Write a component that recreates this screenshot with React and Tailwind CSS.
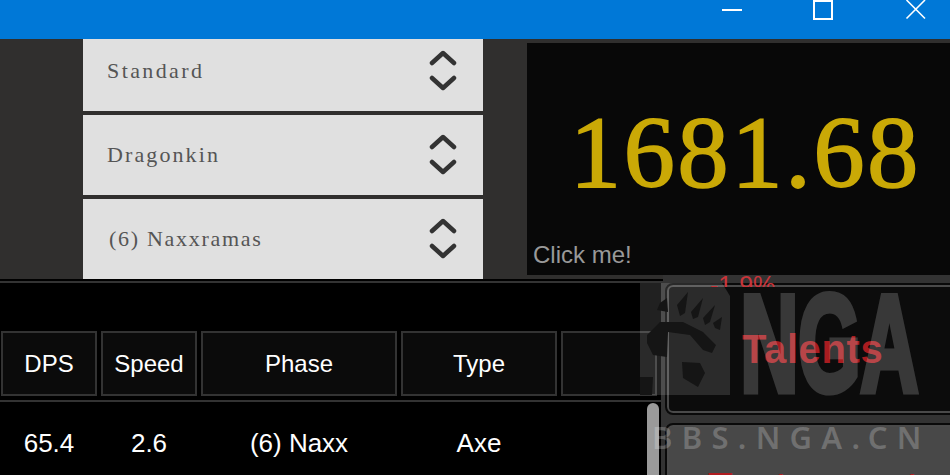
const SANS = "font-['Liberation_Sans',Arial,sans-serif]";

function Updown() {
  return (
    <svg width="28" height="42" viewBox="0 0 28 42" fill="none" stroke="#333" strokeWidth="4.5" strokeLinecap="round" strokeLinejoin="round" className="block">
      <path d="M3 13 L14 3 L25 13" />
      <path d="M3 28 L14 38 L25 28" />
    </svg>
  );
}

function Select({ label, height, pad, top, track }) {
  return (
    <div className={`${height} bg-[#e0e0e0] flex items-center justify-between ${pad} pr-[26px]`}>
      <span className={`${top} mb-[2px] font-['Liberation_Serif',serif] text-[22px] ${track} text-[#555] whitespace-pre`}>{label}</span>
      <div className={top}><Updown /></div>
    </div>
  );
}

function HeadCell({ w, children }) {
  return (
    <div className={`${w} shrink-0 h-[65px] border-2 border-[#333] bg-[#0b0b0b] flex items-center justify-center`}>{children}</div>
  );
}

function BodyCell({ w, children }) {
  return <div className={`${w} shrink-0 flex items-center justify-center`}>{children}</div>;
}

function Watermark() {
  const darks = [
    "688,292 685,313 680,316 677,305",
    "703,298 698,317 693,319 691,312",
    "715,305 710,322 705,325 703,318",
    "722,317 720,330 715,328 713,323",
    "667,298 660,303 657,310 668,312",
    "647,335 660,322 683,322 703,332 716,345 712,353 703,350 690,335 668,332 667,357 653,355 647,343",
    "682,362 700,363 705,373 698,387 683,378",
    "640,377 653,377 652,395 640,395",
  ];
  return (
    <div className="absolute inset-0 overflow-hidden pointer-events-none">
      <svg width="950" height="475" viewBox="0 0 950 475" className="absolute inset-0">
        <polygon points="640,283 722,283 730,296 730,395 640,395" fill="rgba(255,255,255,0.13)" />
        {darks.map((p) => (
          <polygon key={p} points={p} fill="#151515" />
        ))}
      </svg>
      <div className="absolute left-[736px] top-[273px] w-[186px] h-[130px] flex justify-center opacity-[0.18]">
        <span className="font-['Liberation_Sans',Arial,sans-serif] font-bold text-[138px] leading-[140px] text-white scale-x-[0.58] origin-center whitespace-nowrap [-webkit-text-stroke:7px_#fff]">NGA</span>
      </div>
      <div className="absolute left-[652px] top-[417px] font-['Noto_Sans',sans-serif] text-[31px] leading-[40px] font-semibold tracking-[9.3px] text-[rgba(255,255,255,0.22)] whitespace-nowrap">BBS.NGA.CN</div>
    </div>
  );
}

export default function App() {
  return (
    <div className={`relative w-[950px] h-[475px] overflow-hidden bg-[#302f2e] ${SANS}`}>
      {/* title bar */}
      <div className="h-[39px] bg-[#0078d7] relative overflow-hidden">
        <svg width="950" height="39" viewBox="0 0 950 39" className="block" fill="none" stroke="#fff" strokeWidth="2">
          <path d="M722 10 H742" />
          <rect x="814" y="1" width="18" height="18" />
          <path d="M906.5 0 L925 18.5 M925 0 L906.5 18.5" strokeWidth="1.6" />
        </svg>
      </div>

      {/* top row */}
      <div className="flex h-[240px] pl-[83px]">
        <div className="w-[400px] flex flex-col gap-[4px]">
          <Select label="Standard" height="h-[72px]" pad="pl-[24px]" top="mt-[-8px]" track="tracking-[2.4px]" />
          <Select label="Dragonkin" height="h-[80px]" pad="pl-[24px]" top="" track="tracking-[2.1px]" />
          <Select label="(6) Naxxramas" height="h-[80px]" pad="pl-[26px]" top="" track="tracking-[1.7px]" />
        </div>
        <div className="ml-[44px] mt-[4px] w-[423px] h-[232px] bg-[#080808] flex flex-col">
          <div className="h-[198px] pl-[43px] pt-[45px] font-['Liberation_Serif',serif] text-[102px] leading-[130px] tracking-[2.8px] text-[#caa906] [-webkit-text-stroke:1.8px_#caa906]">1681.68</div>
          <div className="pl-[6px] text-[24px] leading-[28px] text-[#999]">Click me!</div>
        </div>
      </div>

      {/* bottom row */}
      <div className="flex">
        {/* table */}
        <div className="w-[663px] h-[202px] bg-black border-t-2 border-black shrink-0 overflow-hidden text-white text-[24px]">
          <div className="h-[200px] border-t-2 border-r-2 border-[#333]">
            <div className="h-[48px]" />
            <div className="flex gap-[4px] pl-[1px]">
              <HeadCell w="w-[96px]">DPS</HeadCell>
              <HeadCell w="w-[96px]">Speed</HeadCell>
              <HeadCell w="w-[196px]">Phase</HeadCell>
              <HeadCell w="w-[156px]">Type</HeadCell>
              <HeadCell w="w-[96px]"></HeadCell>
            </div>
            <div className="mt-[4px] h-[2px] bg-[#333]" />
            <div className="flex h-[84px]">
              <div className="flex gap-[4px] pl-[1px] w-[647px] h-[83px] text-[26px]">
                <BodyCell w="w-[96px]">65.4</BodyCell>
                <BodyCell w="w-[96px]">2.6</BodyCell>
                <BodyCell w="w-[196px]">(6) Naxx</BodyCell>
                <BodyCell w="w-[156px]">Axe</BodyCell>
              </div>
              <div className="w-[12px] h-[90px] mt-[1px] bg-[#9a9a9a] rounded-t-[6px]" />
            </div>
          </div>
        </div>

        {/* buttons */}
        <div className="flex-1 min-w-0 -mt-[4px] pl-[4px] bg-[#333] overflow-hidden">
          <div className="relative z-10 h-[12px] -mb-[2px] overflow-hidden pl-[43px]">
            <div className="-mt-[4px] text-[25px] leading-[28px] text-[#c8353a] whitespace-nowrap">-1.9%</div>
          </div>
          <div className="h-[128px] w-[300px] border-2 border-[#4a4a4a] outline-2 outline-[#0a0a0a] rounded-[6px] bg-[#0c0c0c] flex items-center justify-start pl-[73px]">
            <span className="font-bold text-[40px] leading-[46px] tracking-[0.6px] text-[#a81c20] whitespace-nowrap">Talents</span>
          </div>
          <div className="mt-[12px] h-[80px] w-[300px] border-2 border-[#4a4a4a] outline-2 outline-[#0a0a0a] rounded-[6px] bg-[#484848] pl-[39px] pt-[37px]">
            <span className="font-bold text-[40px] leading-[46px] text-[#b01c20] whitespace-nowrap">Test recent</span>
          </div>
        </div>
      </div>

      <Watermark />
    </div>
  );
}
